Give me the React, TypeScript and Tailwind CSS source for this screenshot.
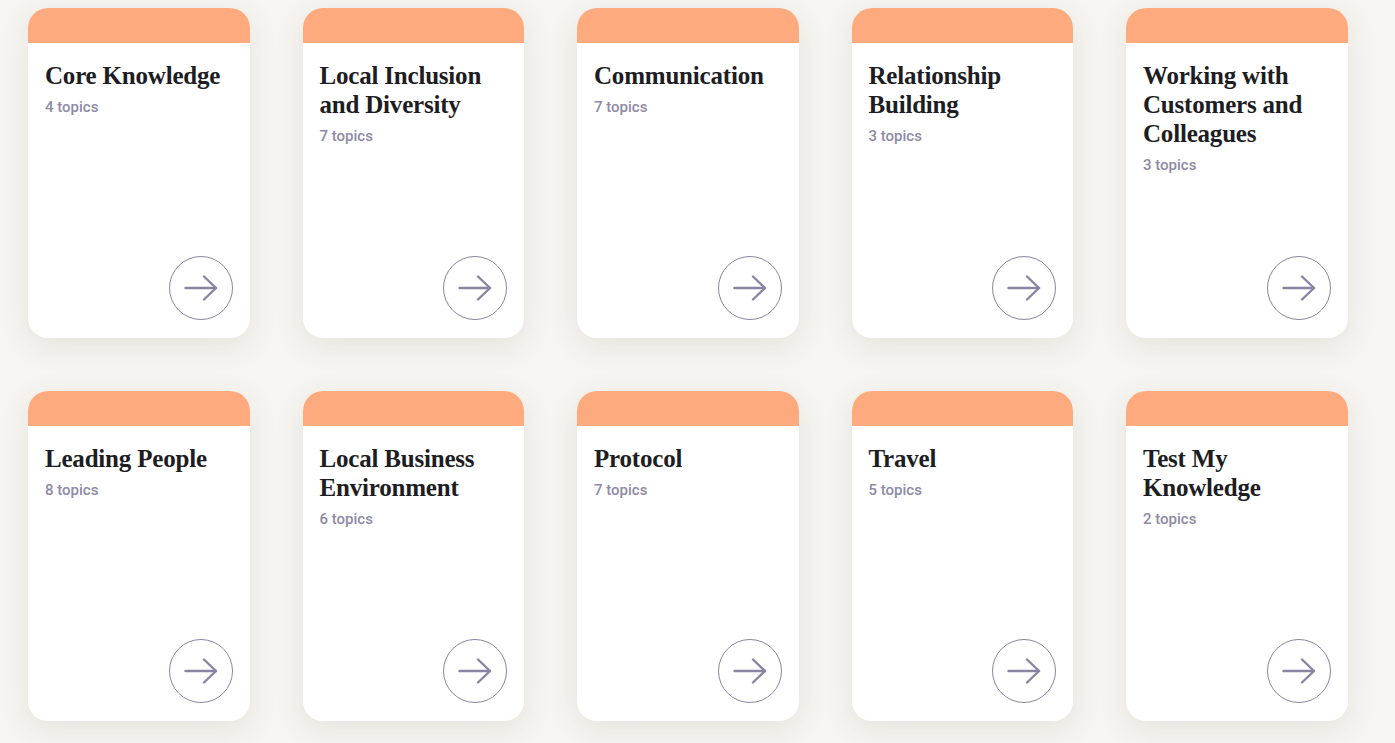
import React from "react";

const cards = [
  { title: "Core Knowledge", topics: 4 },
  { title: "Local Inclusion and Diversity", topics: 7 },
  { title: "Communication", topics: 7 },
  { title: "Relationship Building", topics: 3 },
  { title: "Working with Customers and Colleagues", topics: 3 },
  { title: "Leading People", topics: 8 },
  { title: "Local Business Environment", topics: 6 },
  { title: "Protocol", topics: 7 },
  { title: "Travel", topics: 5 },
  { title: "Test My Knowledge", topics: 2 },
];

function Arrow() {
  return (
    <div className="w-[64px] h-[64px] rounded-full border border-[#8a84a3] flex items-center justify-center">
      <svg width="34" height="26" viewBox="0 0 34 26" fill="none" stroke="#8a84a3" strokeWidth="2.4" strokeLinecap="round" strokeLinejoin="round">
        <path d="M1.5 13 H32" />
        <path d="M20 1.5 L32 13 L20 24.5" />
      </svg>
    </div>
  );
}

export default function App() {
  return (
    <div className="min-h-[743px] w-full bg-[#f6f5f1] pl-[28px] pt-[8px] pb-[30px]">
      <div className="grid grid-cols-[repeat(5,221.5px)] gap-x-[53px] gap-y-[53px]">
        {cards.map((c) => (
          <div
            key={c.title}
            className="h-[330px] rounded-[20px] bg-white shadow-[0_8px_30px_rgba(80,70,50,0.10)] flex flex-col overflow-hidden"
          >
            <div className="h-[35px] bg-[#fdab7e] shrink-0" />
            <div className="flex-1 flex flex-col pl-[17px] pr-[17px] pt-[18px] pb-[18px]">
              <h3 className="text-[25px] leading-[29px] font-bold text-[#1d1d23] tracking-[-0.2px] [font-family:'Liberation_Serif','DejaVu_Serif',serif]">
                {c.title}
              </h3>
              <p className="mt-[8px] text-[15px] leading-[18px] font-medium text-[#8e8aa6] [font-family:Roboto,'Noto_Sans',sans-serif]">
                {c.topics} topics
              </p>
              <div className="mt-auto flex justify-end">
                <Arrow />
              </div>
            </div>
          </div>
        ))}
      </div>
    </div>
  );
}
